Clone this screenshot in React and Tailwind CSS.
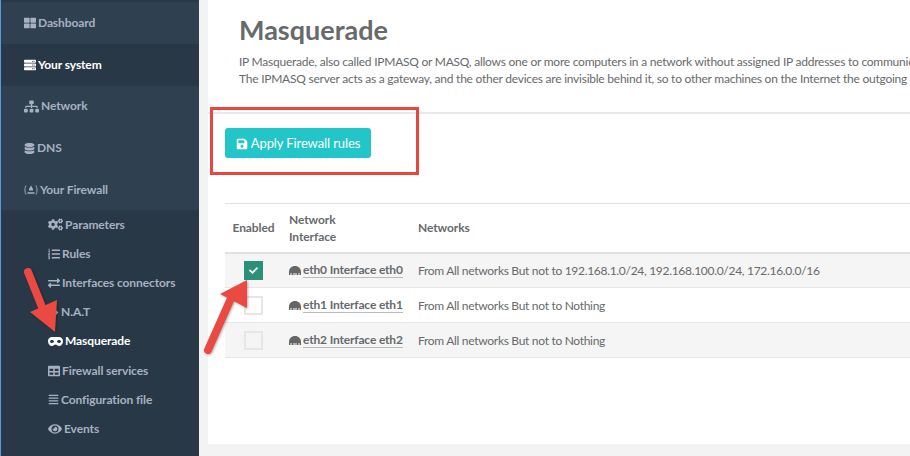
import { FaThLarge, FaServer, FaSitemap, FaDatabase, FaCogs, FaListOl, FaExchangeAlt, FaTable, FaAlignJustify, FaEye, FaSave, FaCheck, FaArrowRight } from 'react-icons/fa';

const FONT = "font-['Lato','Noto_Sans',sans-serif]";

function FirewallIcon() {
  return (
    <svg width="14" height="12" viewBox="0 0 14 12" fill="none" stroke="currentColor">
      <path d="M2 1.5C.6 4 .6 8 2 10.5M12 1.5c1.4 2.5 1.4 6.500 0 9" strokeWidth="0.9" />
      <path d="M7 1.500 9 5v1.500H5V5z" fill="currentColor" stroke="none" />
      <path d="M3.500 9h7" strokeWidth="1.500" />
    </svg>
  );
}

function MaskIcon() {
  return (
    <svg width="15" height="9" viewBox="0 0 15 9" fill="currentColor">
      <path fillRule="evenodd" d="M4 0h7c2.300 0 4 1.800 4 4.200C15 6.800 13.400 9 11.200 9 9.500 9 8.700 7.400 7.500 7.400 6.300 7.400 5.500 9 3.800 9 1.600 9 0 6.800 0 4.200 0 1.800 1.700 0 4 0zM3.800 3C2.700 3 2 3.700 2 4.500S2.900 6 4 6s2-.6 2-1.400C6 3.700 5 3 3.800 3zm7.200 0c-1.100 0-2 .7-2 1.600C9 5.400 9.900 6 11 6s2-.7 2-1.500S12.200 3 11 3z" />
    </svg>
  );
}

function RouterIcon() {
  return (
    <svg width="12" height="9" viewBox="0 0 12 9" fill="#666">
      <path d="M0 9V6C0 2.500 2.500 0 6 0s6 2.500 6 6v3h-1V7h-.5v2h-1V7H9v2H8V7h-.5v2h-1V7h-1v2h-1V7H4v2H3V7h-.5v2h-1V7H1v2z" />
    </svg>
  );
}

const topNav = [
  { label: 'Dashboard', icon: <FaThLarge size={12} /> },
  { label: 'Your system', icon: <FaServer size={12} />, active: true },
  { label: 'Network', icon: <FaSitemap size={15} /> },
  { label: 'DNS', icon: <FaDatabase size={11} /> },
  { label: 'Your Firewall', icon: <FirewallIcon /> },
];

const subNav = [
  { label: 'Parameters', icon: <FaCogs size={15} /> },
  { label: 'Rules', icon: <FaListOl size={12} /> },
  { label: 'Interfaces connectors', icon: <FaExchangeAlt size={12} /> },
  { label: 'N.A.T', icon: <FaArrowRight size={11} /> },
  { label: 'Masquerade', icon: <MaskIcon />, active: true },
  { label: 'Firewall services', icon: <FaTable size={12} /> },
  { label: 'Configuration file', icon: <FaAlignJustify size={11} /> },
  { label: 'Events', icon: <FaEye size={14} /> },
];

const rows = [
  { name: 'eth0 Interface eth0', networks: 'From All networks But not to 192.168.1.0/24, 192.168.100.0/24, 172.16.0.0/16', checked: true },
  { name: 'eth1 Interface eth1', networks: 'From All networks But not to Nothing' },
  { name: 'eth2 Interface eth2', networks: 'From All networks But not to Nothing' },
];

function Sidebar() {
  return (
    <aside className="w-[199px] shrink-0 bg-[#2f4050] border-l border-[#5b9bd5] flex flex-col">
      <div className="h-[2px] bg-[#293846]" />
      {topNav.map((item) => (
        <div
          key={item.label}
          className={`h-[41.800px] pl-[23px] flex items-center gap-[2px] text-[12px] font-bold tracking-[-0.1px] ${
            item.active ? 'bg-[#293846] text-white' : 'text-[#a7b1c2]'
          }`}
        >
          {item.icon}
          <span>{item.label}</span>
        </div>
      ))}
      <div className="flex-1 -mt-[1px] bg-[#293846]">
        {subNav.map((item) => (
          <div
            key={item.label}
            className={`h-[29.200px] pl-[47px] flex items-center gap-[2px] text-[12px] font-bold tracking-[-0.1px] ${
              item.active ? 'text-white' : 'text-[#a7b1c2]'
            }`}
          >
            {item.icon}
            <span>{item.label}</span>
          </div>
        ))}
      </div>
    </aside>
  );
}

export default function App() {
  return (
    <div className={`${FONT} relative flex w-[910px] h-[456px] overflow-hidden bg-[#f3f3f4] text-[#676a6c]`}>
      <Sidebar />
      <main className="ml-[9px] flex-1 min-w-0 h-[444px] bg-white overflow-hidden">
        <div className="h-[114px] border-b-2 border-[#e7eaec] pl-[31px] pt-[13px] whitespace-nowrap">
          <h2 className="text-[27px] leading-[34px] font-bold">Masquerade</h2>
          <p className="mt-[6px] text-[12px] leading-[17px] tracking-[-0.24px]">IP Masquerade, also called IPMASQ or MASQ, allows one or more computers in a network without assigned IP addresses to communicate with the Internet</p>
          <p className="text-[12px] leading-[17px] tracking-[-0.24px]">The IPMASQ server acts as a gateway, and the other devices are invisible behind it, so to other machines on the Internet the outgoing traffic appears to come from it</p>
        </div>
        <div className="pl-[17px] pt-[14px]">
          <button className="w-[146px] h-[30px] pt-[1px] rounded-[3px] bg-[#23c6c8] text-white text-[13px] tracking-[-0.1px] flex items-center justify-center gap-[3px]">
            <FaSave size={12} />
            Apply Firewall rules
          </button>
        </div>
        <div className="ml-[17px] mt-[45px]">
          <table className="w-full table-fixed border-collapse text-[12px]">
            <colgroup>
              <col className="w-[56px]" />
              <col className="w-[129px]" />
              <col />
            </colgroup>
            <thead>
              <tr className="h-[49px] border-t border-b-2 border-[#e1e1e1] text-left">
                <th className="text-center font-bold tracking-[-0.1px] pl-[1px]">Enabled</th>
                <th className="pl-[8px] font-bold leading-[17px] tracking-[-0.1px]">Network<br />Interface</th>
                <th className="pl-[8px] pt-[1px] font-bold tracking-[-0.1px]">Networks</th>
              </tr>
            </thead>
            <tbody>
              {rows.map((row, i) => (
                <tr key={row.name} className={`h-[35px] border-b border-[#e7e7e7] ${i % 2 === 0 ? 'bg-[#f5f5f5]' : 'bg-white'}`}>
                  <td>
                    {row.checked ? (
                      <div className="mx-auto w-[19px] h-[19px] bg-[#2a9078] flex items-center justify-center text-white">
                        <FaCheck size={9} />
                      </div>
                    ) : (
                      <div className="mx-auto w-[19px] h-[19px] border-2 border-[#e6e6e2] bg-transparent" />
                    )}
                  </td>
                  <td className="pl-[8px] pt-[1px]">
                    <span className="inline-flex items-center gap-[2px] font-bold tracking-[-0.16px]">
                      <RouterIcon />
                      <span className="border-b border-[#bbb] leading-[15px]">{row.name}</span>
                    </span>
                  </td>
                  <td className="pl-[8px] pt-[1px] whitespace-nowrap tracking-[-0.3px]">{row.networks}</td>
                </tr>
              ))}
            </tbody>
          </table>
        </div>
      </main>

      {/* annotations drawn over the screenshot */}
      <div className="absolute left-[210px] top-[107px] w-[209px] h-[68px] border-[3px] border-[#ea4640]" />
      <svg className="absolute left-0 top-0 drop-shadow-[1px_1px_1px_rgba(0,0,0,0.3)]" width="910" height="456" fill="#ea4a41">
        <line x1="28" y1="272" x2="44" y2="312" stroke="#ea4a41" strokeWidth="8" strokeLinecap="round" />
        <path d="M30 312 57 300 55 332z" />
        <line x1="208" y1="350" x2="232" y2="296" stroke="#ea4a41" strokeWidth="8" strokeLinecap="round" />
        <path d="M220 294 247 280 247 308z" />
      </svg>
    </div>
  );
}
